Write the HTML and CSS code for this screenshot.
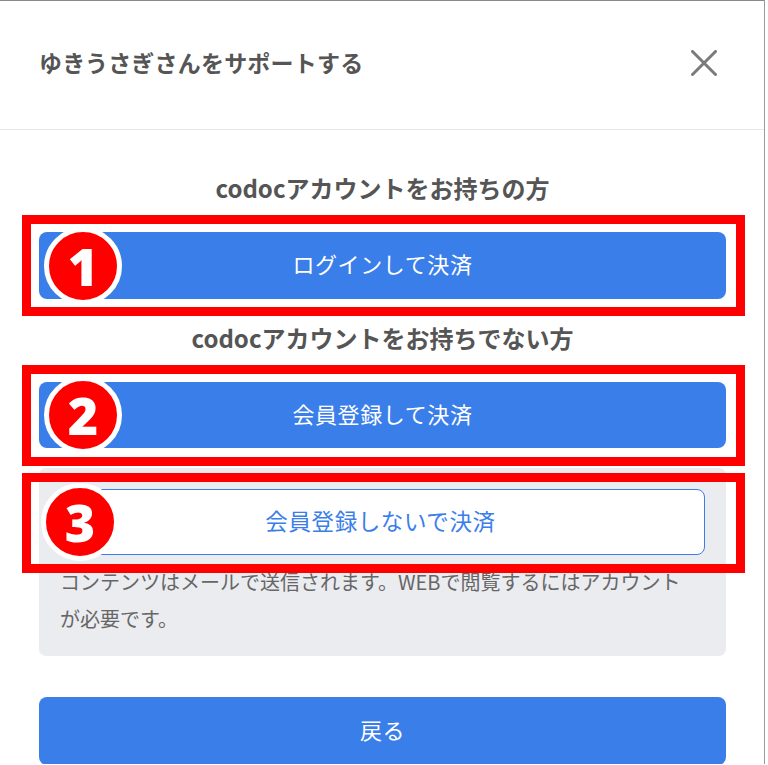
FILE: index.html
```html
<!DOCTYPE html>
<html lang="ja">
  <head>
    <meta charset="UTF-8" />
    <meta name="viewport" content="width=device-width, initial-scale=1.0" />
    <title>サポート</title>
    <link rel="stylesheet" href="styles.css">
  </head>
  <body>
    <div class="modal">
      <header class="modal-header">
        <h1>ゆきうさぎさんをサポートする</h1>
        <button class="close" type="button" aria-label="閉じる">
          <svg width="26" height="26" viewBox="0 0 26 26">
            <path d="M1.5 1.5 L24.5 24.5 M24.5 1.5 L1.5 24.5" stroke="#7a7a7a" stroke-width="3" stroke-linecap="round" fill="none" />
          </svg>
        </button>
      </header>

      <div class="modal-body">
        <h2>codocアカウントをお持ちの方</h2>
        <div class="step">
          <button class="btn btn-primary" type="button">ログインして決済</button>
          <span class="mark"></span>
          <span class="num">1</span>
        </div>

        <h2 class="second">codocアカウントをお持ちでない方</h2>
        <div class="step step-2">
          <button class="btn btn-primary" type="button">会員登録して決済</button>
          <span class="mark"></span>
          <span class="num">2</span>
        </div>

        <div class="guest">
          <div class="step step-3">
            <button class="btn btn-outline" type="button">会員登録しないで決済</button>
            <span class="mark"></span>
            <span class="num">3</span>
          </div>
          <p>コンテンツはメールで送信されます。WEBで閲覧するにはアカウントが必要です。</p>
        </div>

        <button class="btn btn-primary back" type="button">戻る</button>
      </div>
    </div>
  </body>
</html>
```

FILE: styles.css
```css
body {
  margin: 0;
  padding: 0;
  background-color: #fff;
  font-family: "Noto Sans CJK JP", "Noto Sans", sans-serif;
  color: #555;
}

.modal {
  width: 765px;
  height: 764px;
  border-top: 1px solid #8a8a8a;
  border-right: 1px solid #9a9a9a;
  box-sizing: border-box;
  overflow: hidden;
}

.modal-header {
  height: 128px;
  border-bottom: 1px solid #e8e8ec;
  display: flex;
  align-items: center;
  justify-content: space-between;
  padding: 0 47px 0 39px;
}

.modal-header h1 {
  margin: 0;
  font-size: 23px;
  font-weight: 700;
  color: #555;
  line-height: 1;
  padding-bottom: 6px;
  letter-spacing: 0.2px;
}

.close {
  border: none;
  background: none;
  padding: 0;
  width: 26px;
  height: 26px;
  cursor: pointer;
  margin-bottom: 4px;
}

.close svg {
  display: block;
}

.modal-body {
  padding: 41px 38px 0 39px;
}

h2 {
  margin: 0 0 27px;
  font-size: 24px;
  font-weight: 700;
  line-height: 34px;
  text-align: center;
  color: #555;
}

h2.second {
  margin-top: 22px;
  margin-bottom: 27px;
}

.step {
  position: relative;
}

.btn {
  display: block;
  width: 100%;
  height: 67px;
  padding: 0 0 5px;
  border-radius: 8px;
  font-family: inherit;
  font-size: 22px;
  letter-spacing: 0.6px;
  cursor: pointer;
  box-sizing: border-box;
}

.btn-primary {
  background-color: #3a7ee9;
  color: #fff;
  border: none;
}

.btn-outline {
  background-color: #fff;
  color: #3a7ee9;
  border: 1.5px solid #3a7ee9;
  height: 66px;
  font-size: 22.5px;
}

.step-2 .btn {
  height: 66px;
}

/* red frame drawn round each option */
.mark {
  position: absolute;
  top: -17px;
  bottom: -17px;
  left: -17px;
  right: -19px;
  border: 9px solid #ff0000;
  pointer-events: none;
}

.step-2 .mark {
  bottom: -18px;
}

.step-3 .mark {
  top: -16px;
  bottom: -18px;
  left: -34px;
  right: -40px;
}

.num {
  position: absolute;
  left: 5px;
  top: 50%;
  width: 68px;
  height: 68px;
  margin-top: -39px;
  border: 5px solid #fff;
  border-radius: 50%;
  background-color: #ff0000;
  color: #fff;
  font-family: "Open Sans", "Noto Sans", sans-serif;
  font-size: 52px;
  font-weight: 800;
  line-height: 68px;
  text-align: center;
}

.step-3 .num {
  left: -15px;
}

.guest {
  margin-top: 20px;
  background-color: #ebecf0;
  border-radius: 7px;
  padding: 21px 21px 19px 17px;
}

.guest p {
  max-width: 640px;
  margin: 8px 0 0 4px;
  font-size: 20px;
  line-height: 37px;
  color: #666;
}

.back {
  margin-top: 41px;
  height: 68px;
}
```
